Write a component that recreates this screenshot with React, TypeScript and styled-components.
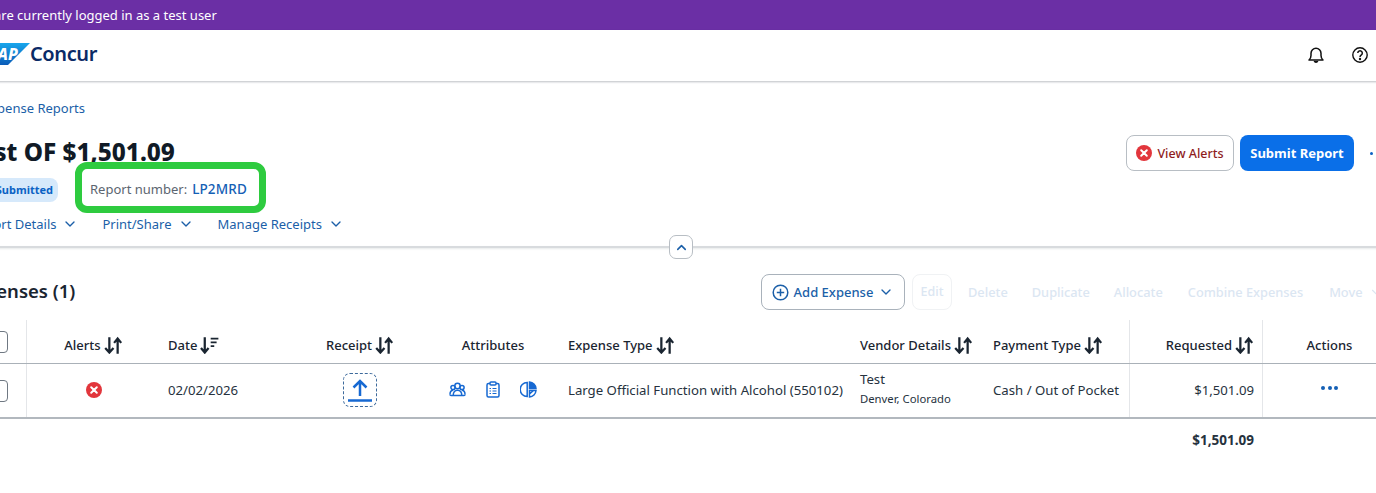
import React from 'react';
import styled, { createGlobalStyle } from 'styled-components';
import { ChevronDown, ChevronUp } from 'lucide-react';

const GlobalStyle = createGlobalStyle`
  html, body {
    margin: 0;
    padding: 0;
    background: #fff;
    overflow: hidden;
  }
  body {
    font-family: "Noto Sans", "Open Sans", Arial, sans-serif;
    color: #1d2d3e;
    -webkit-font-smoothing: antialiased;
  }
`;

const Page = styled.div`
  width: 1436px;
  margin-left: -40px;
`;

const Banner = styled.div`
  height: 30px;
  background: #6b2fa5;
  color: #fff;
  font-size: 13px;
  line-height: 30px;
  padding-left: 8px;
`;

const NavBar = styled.header`
  height: 51px;
  display: flex;
  align-items: center;
  justify-content: space-between;
  padding: 0 27px 0 26px;
  box-shadow: 0 1px 2px rgba(60, 70, 80, 0.35);
  position: relative;
`;

const Brand = styled.div`
  display: flex;
  align-items: center;
  margin-top: -4px;
`;

const BrandName = styled.span`
  font-size: 20px;
  font-weight: 600;
  color: #0a2a66;
  letter-spacing: -0.4px;
  margin-top: -1px;
`;

const NavIcons = styled.div`
  display: flex;
  align-items: center;
  gap: 26px;
  margin-top: -1px;
`;

const ReportHeader = styled.section`
  padding: 18px 6px 0 7px;
`;

const Breadcrumb = styled.a`
  display: block;
  height: 18px;
  line-height: 18px;
  font-size: 13px;
  color: #1b5fa8;
  margin-left: 16px;
`;

const TitleRow = styled.div`
  display: flex;
  align-items: center;
  justify-content: space-between;
  height: 36px;
  margin-top: 18px;
`;

const Title = styled.h1`
  margin: -3px 0 0 0;
  font-size: 24.3px;
  font-weight: 800;
  color: #101a26;
  line-height: 32px;
`;

const Actions = styled.div`
  display: flex;
  align-items: center;
  gap: 6px;
`;

const AlertButton = styled.button`
  height: 36px;
  width: 108px;
  display: flex;
  align-items: center;
  justify-content: center;
  gap: 5px;
  border: 1px solid #b8bec4;
  border-radius: 8px;
  background: #fff;
  color: #8f1d1d;
  font: 500 12.5px "Noto Sans", sans-serif;
  padding: 0;
`;

const SubmitButton = styled.button`
  height: 36px;
  width: 114px;
  border: 0;
  border-radius: 8px;
  background: #0a6fe8;
  color: #fff;
  font: 700 13px "Noto Sans", sans-serif;
  padding: 0;
`;

const MoreButton = styled.span`
  display: flex;
  gap: 5px;
  margin-left: 10px;
  width: 20px;
`;

const Dot = styled.i`
  width: 3px;
  height: 3px;
  border-radius: 50%;
  background: #0b62c4;
`;

const MetaRow = styled.div`
  display: flex;
  align-items: stretch;
  height: 24px;
  margin-top: 7px;
`;

const StatusChip = styled.span`
  height: 24px;
  line-height: 24px;
  width: 91px;
  border-radius: 8px;
  background: #d6e9fb;
  color: #0b62c4;
  font-size: 11px;
  font-weight: 700;
  text-align: right;
  padding-right: 5px;
  box-sizing: border-box;
`;

const ReportNumber = styled.div`
  position: relative;
  margin-left: 32px;
  display: flex;
  align-items: center;
  gap: 5px;
  font-size: 13px;
  color: #5b6570;
  padding-bottom: 2px;
  box-sizing: border-box;
`;

const Highlight = styled.div`
  position: absolute;
  left: -15px;
  top: -16px;
  width: 191px;
  height: 51px;
  box-sizing: border-box;
  border: 7px solid #2ecb3f;
  border-radius: 12px;
`;

const ReportCode = styled.span`
  color: #1560b5;
  font-weight: 500;
  font-size: 13.5px;
  letter-spacing: 0.15px;
  margin-top: -1px;
`;

const MenuRow = styled.nav`
  display: flex;
  align-items: center;
  gap: 24px;
  height: 20px;
  margin-top: 12px;
  padding-left: 3px;
`;

const MenuItem = styled.a`
  display: flex;
  align-items: center;
  gap: 6px;
  font-size: 13px;
  color: #1b5fa8;
`;

const Divider = styled.div`
  position: relative;
  height: 2px;
  margin-top: 12px;
  background: #d8dbde;
  box-shadow: 0 1px 2px rgba(60, 70, 80, 0.12);
`;

const CollapseButton = styled.button`
  position: absolute;
  left: 709px;
  top: -11px;
  width: 24px;
  height: 24px;
  padding: 0;
  display: flex;
  align-items: center;
  justify-content: center;
  background: #fff;
  border: 1px solid #b8bec4;
  border-radius: 7px;
  color: #1b5fa8;
`;

const Toolbar = styled.div`
  display: flex;
  align-items: center;
  justify-content: space-between;
  height: 36px;
  margin-top: 26px;
  padding-left: 4px;
`;

const SectionTitle = styled.h2`
  margin: -3px 0 0 0;
  font-size: 18.5px;
  font-weight: 600;
  color: #1a2531;
`;

const ToolbarActions = styled.div`
  display: flex;
  align-items: center;
  width: 635px;
`;

const AddButton = styled.button`
  width: 144px;
  height: 36px;
  display: flex;
  align-items: center;
  justify-content: center;
  gap: 5px;
  padding: 0;
  border: 1px solid #a9b2bb;
  border-radius: 8px;
  background: #fff;
  color: #1b5fa8;
  font: 500 13px "Noto Sans", sans-serif;
`;

const EditButton = styled.span`
  width: 40px;
  height: 36px;
  margin-left: 7px;
  box-sizing: border-box;
  border: 1px solid #f0f2f4;
  border-radius: 8px;
  text-align: center;
  line-height: 34px;
  font-size: 12.5px;
  font-weight: 500;
  color: #dbe6f2;
`;

const DisabledAction = styled.span<{ $gap: number }>`
  margin-left: ${(p) => p.$gap}px;
  font-size: 12.8px;
  font-weight: 500;
  color: #dbe6f2;
  display: flex;
  align-items: center;
  gap: 6px;
  white-space: nowrap;
`;

const TableRow = styled.div<{ $height: number; $rule: string }>`
  display: grid;
  grid-template-columns: 67px 133px 134px 132px 134px 292px 133px 145px 133px 133px;
  height: ${(p) => p.$height}px;
  border-bottom: ${(p) => p.$rule};
`;

const HeaderRow = styled(TableRow)`
  margin-top: 10px;
`;

type Align = 'left' | 'center' | 'right';

const Cell = styled.div<{ $align?: Align; $line?: boolean }>`
  display: flex;
  align-items: center;
  min-width: 0;
  box-sizing: border-box;
  white-space: nowrap;
  font-size: 13.2px;
  color: #26323e;
  padding: ${(p) => (p.$align === 'right' ? '0 8px 0 0' : p.$align === 'center' ? '0' : '0 0 0 8px')};
  justify-content: ${(p) =>
    p.$align === 'right' ? 'flex-end' : p.$align === 'center' ? 'center' : 'flex-start'};
  border-right: ${(p) => (p.$line ? '1px solid #e4e6e9' : '0')};
  gap: 3px;
`;

const HeaderCell = styled(Cell)`
  padding-top: 6px;
  font-size: 13px;
  font-weight: 500;
  color: #1a2531;
`;

const BodyCell = styled(Cell)`
  padding-bottom: 2px;
`;

const Checkbox = styled.span`
  width: 22px;
  height: 22px;
  margin-left: 18px;
  box-sizing: border-box;
  border: 1px solid #6f7882;
  border-radius: 4px;
  background: #fff;
`;

const ReceiptButton = styled.span`
  width: 34px;
  height: 34px;
  display: flex;
  align-items: center;
  justify-content: center;
  box-sizing: border-box;
  border: 1px dashed #3d6a9c;
  border-radius: 7px;
`;

const AttributeIcons = styled.div`
  display: flex;
  align-items: center;
  gap: 20px;
`;

const VendorStack = styled.div`
  display: flex;
  flex-direction: column;
  gap: 3px;
  margin-top: -3px;
`;

const VendorPlace = styled.span`
  font-size: 11.3px;
`;

const RowMenu = styled.span`
  display: flex;
  gap: 2.5px;
  margin-top: -4px;
`;

const RowDot = styled.i`
  width: 4px;
  height: 4px;
  border-radius: 50%;
  background: #1560b5;
`;

const TotalCell = styled(Cell)`
  grid-column: 9;
  padding-right: 9px;
  font-size: 13.5px;
  font-weight: 700;
`;

const SortIcon = () => (
  <svg width="19" height="18" viewBox="1 1 16 15.200" fill="none" stroke="#1a2531" strokeWidth="1.900">
    <path d="M5.500 2v13M2 11.200l3.500 3.800 3.500-3.800" />
    <path d="M12.500 16V3M9.500 6.800l3-3.600 3 3.600" />
  </svg>
);

const DateSortIcon = () => (
  <svg width="19" height="18" viewBox="1 1 16 15.200" fill="none" stroke="#1a2531" strokeWidth="1.900">
    <path d="M5 2v13M1.800 11.200 5 15l3.200-3.800" />
    <path d="M10 3.200h6.500M10 6.400h5M10 9.600h3" strokeWidth="1.500" />
  </svg>
);

const ErrorIcon = ({ size }: { size: number }) => (
  <svg width={size} height={size} viewBox="0 0 16 16">
    <circle cx="8" cy="8" r="8" fill="#e2363c" />
    <path d="M5.200 5.200l5.600 5.600M10.800 5.200l-5.600 5.600" stroke="#fff" strokeWidth="2" strokeLinecap="round" />
  </svg>
);

const SapLogo = () => (
  <svg width="44" height="22" viewBox="0 0 44 22">
    <defs>
      <linearGradient id="sapBlue" x1="0" y1="0" x2="0" y2="1">
        <stop offset="0" stopColor="#18a6ec" />
        <stop offset="1" stopColor="#0b5cb8" />
      </linearGradient>
    </defs>
    <polygon points="0,0 44,0 22,22 0,22" fill="url(#sapBlue)" />
    <text x="3" y="17" fontFamily="Noto Sans, sans-serif" fontSize="16" fontWeight="800" fontStyle="italic" fill="#fff">
      SAP
    </text>
  </svg>
);

const BellIcon = () => (
  <svg width="18" height="18" viewBox="0 0 18 18" fill="none" stroke="#111" strokeWidth="1.500">
    <path d="M2 14h14c-1.400-1.200-2-2.400-2-4.500V7.200A5 5 0 0 0 4 7.200v2.300C4 11.600 3.400 12.800 2 14z" strokeLinejoin="round" />
    <path d="M7.200 15a2 2 0 0 0 3.600 0" fill="#111" />
  </svg>
);

const HelpIcon = () => (
  <svg width="18" height="18" viewBox="0 0 18 18" fill="none" stroke="#111" strokeWidth="1.400">
    <circle cx="9" cy="9" r="7.200" />
    <path d="M6.800 7.100A2.250 2.250 0 1 1 10.300 9c-.9.500-1.300 1-1.300 2" strokeWidth="1.500" />
    <circle cx="9" cy="13" r=".5" fill="#111" />
  </svg>
);

const PlusCircleIcon = () => (
  <svg width="17" height="17" viewBox="0 0 17 17" fill="none" stroke="#1b5fa8" strokeWidth="1.500">
    <circle cx="8.500" cy="8.500" r="7.300" />
    <path d="M8.500 4.800v7.400M4.800 8.500h7.400" />
  </svg>
);

const UploadIcon = () => (
  <svg width="26" height="26" viewBox="0 0 26 26" fill="none" stroke="#1769d2" strokeWidth="2.500">
    <path d="M13 19V4M6.500 10.500 13 4l6.500 6.500" />
    <path d="M1 23.500h24" strokeWidth="2.500" />
  </svg>
);

const PeopleIcon = () => (
  <svg width="17" height="15" viewBox="0 0 17 15" fill="none" stroke="#1769d2" strokeWidth="1.500">
    <circle cx="8.500" cy="4" r="2.700" />
    <circle cx="4" cy="5.500" r="2.100" />
    <circle cx="13" cy="5.500" r="2.100" />
    <path d="M1 12.500c0-3 1.400-4.300 3.200-4.300M16 12.500c0-3-1.400-4.300-3.200-4.300" />
    <path d="M4.200 13.500c0-3.500 1.800-5.300 4.300-5.300s4.300 1.800 4.300 5.300zM1 12.500c0 .6.500 1 1 1h2.200M16 12.500c0 .6-.5 1-1 1h-2.200" />
  </svg>
);

const ClipboardIcon = () => (
  <svg width="14" height="17" viewBox="0 0 14 17" fill="none" stroke="#1769d2" strokeWidth="1.500">
    <path d="M4 2.500H2.500A1.500 1.500 0 0 0 1 4v10.500A1.500 1.500 0 0 0 2.500 16h9a1.500 1.500 0 0 0 1.500-1.500V4a1.500 1.500 0 0 0-1.500-1.500H10" />
    <rect x="4" y="1" width="6" height="3" rx="1" />
    <path d="M3.500 7.500h1.500M6.500 7.500h4M3.500 10h1.500M6.500 10h4M3.500 12.500h1.500M6.500 12.500h4" strokeWidth="1.200" />
  </svg>
);

const PieIcon = () => (
  <svg width="17" height="17" viewBox="0 0 17 17" fill="none" stroke="#1769d2" strokeWidth="1.500">
    <path d="M7.200 1.500a7 7 0 0 0 0 14z" />
    <path d="M9.500 1a7 7 0 0 1 6.500 6.500H9.500z" fill="#1769d2" />
    <path d="M9.500 9.500H16a7 7 0 0 1-6.500 6.500zM9.500 13l4-3.500" />
  </svg>
);

const App: React.FC = () => (
  <Page>
    <GlobalStyle />
    <Banner>You are currently logged in as a test user</Banner>
    <NavBar>
      <Brand>
        <SapLogo />
        <BrandName>Concur</BrandName>
      </Brand>
      <NavIcons>
        <BellIcon />
        <HelpIcon />
      </NavIcons>
    </NavBar>

    <ReportHeader>
      <Breadcrumb>Expense Reports</Breadcrumb>
      <TitleRow>
        <Title>Test OF $1,501.09</Title>
        <Actions>
          <AlertButton>
            <ErrorIcon size={16} />
            View Alerts
          </AlertButton>
          <SubmitButton>Submit Report</SubmitButton>
          <MoreButton>
            <Dot />
            <Dot />
            <Dot />
          </MoreButton>
        </Actions>
      </TitleRow>
      <MetaRow>
        <StatusChip>Not Submitted</StatusChip>
        <ReportNumber>
          Report number:
          <ReportCode>LP2MRD</ReportCode>
          <Highlight />
        </ReportNumber>
      </MetaRow>
      <MenuRow>
        <MenuItem>
          Report Details <ChevronDown size={16} strokeWidth={2} />
        </MenuItem>
        <MenuItem>
          Print/Share <ChevronDown size={16} strokeWidth={2} />
        </MenuItem>
        <MenuItem>
          Manage Receipts <ChevronDown size={16} strokeWidth={2} />
        </MenuItem>
      </MenuRow>
    </ReportHeader>

    <Divider>
      <CollapseButton>
        <ChevronUp size={15} strokeWidth={2.5} />
      </CollapseButton>
    </Divider>

    <Toolbar>
      <SectionTitle>Expenses (1)</SectionTitle>
      <ToolbarActions>
        <AddButton>
          <PlusCircleIcon />
          Add Expense
          <ChevronDown size={16} strokeWidth={2} />
        </AddButton>
        <EditButton>Edit</EditButton>
        <DisabledAction $gap={16}>Delete</DisabledAction>
        <DisabledAction $gap={24}>Duplicate</DisabledAction>
        <DisabledAction $gap={24}>Allocate</DisabledAction>
        <DisabledAction $gap={25}>Combine Expenses</DisabledAction>
        <DisabledAction $gap={26}>
          Move <ChevronDown size={14} />
        </DisabledAction>
      </ToolbarActions>
    </Toolbar>

    <HeaderRow $height={43} $rule="1px solid #aab1b8">
      <Cell $line>
        <Checkbox />
      </Cell>
      <HeaderCell $align="center">
        Alerts <SortIcon />
      </HeaderCell>
      <HeaderCell>
        Date <DateSortIcon />
      </HeaderCell>
      <HeaderCell $align="center">
        Receipt <SortIcon />
      </HeaderCell>
      <HeaderCell $align="center">Attributes</HeaderCell>
      <HeaderCell>
        Expense Type <SortIcon />
      </HeaderCell>
      <HeaderCell>
        Vendor Details <SortIcon />
      </HeaderCell>
      <HeaderCell $line>
        Payment Type <SortIcon />
      </HeaderCell>
      <HeaderCell $align="right" $line>
        Requested <SortIcon />
      </HeaderCell>
      <HeaderCell $align="center">Actions</HeaderCell>
    </HeaderRow>

    <TableRow $height={53} $rule="2px solid #b2b8be">
      <Cell $line>
        <Checkbox />
      </Cell>
      <BodyCell $align="center">
        <ErrorIcon size={16} />
      </BodyCell>
      <BodyCell>02/02/2026</BodyCell>
      <BodyCell $align="center">
        <ReceiptButton>
          <UploadIcon />
        </ReceiptButton>
      </BodyCell>
      <BodyCell $align="center">
        <AttributeIcons>
          <PeopleIcon />
          <ClipboardIcon />
          <PieIcon />
        </AttributeIcons>
      </BodyCell>
      <BodyCell>Large Official Function with Alcohol (550102)</BodyCell>
      <BodyCell>
        <VendorStack>
          <span>Test</span>
          <VendorPlace>Denver, Colorado</VendorPlace>
        </VendorStack>
      </BodyCell>
      <BodyCell $line>Cash / Out of Pocket</BodyCell>
      <BodyCell $align="right" $line>
        $1,501.09
      </BodyCell>
      <BodyCell $align="center">
        <RowMenu>
          <RowDot />
          <RowDot />
          <RowDot />
        </RowMenu>
      </BodyCell>
    </TableRow>

    <TableRow $height={42} $rule="0">
      <TotalCell $align="right">$1,501.09</TotalCell>
    </TableRow>
  </Page>
);

export default App;
